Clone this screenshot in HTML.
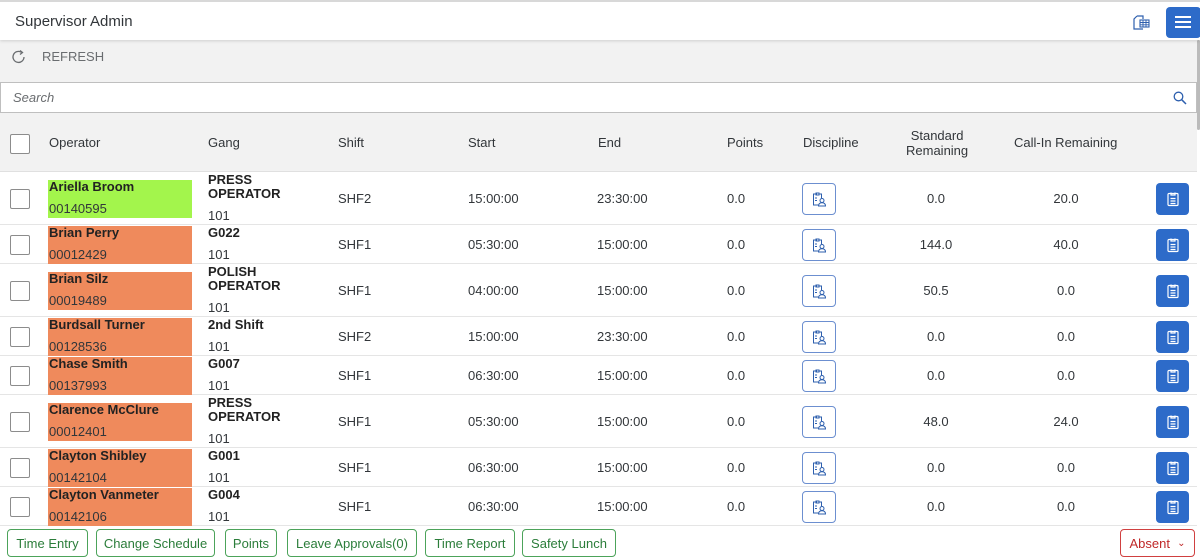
<!DOCTYPE html>
<html><head><meta charset="utf-8"><style>
*{box-sizing:border-box;margin:0;padding:0}
body{width:1200px;height:553px;overflow:hidden;background:#fff;font-family:"Liberation Sans",Arial,sans-serif;color:#32363a;position:relative;font-size:13px}
.top{position:absolute;left:0;top:0;width:1200px;height:40px;background:#fff;border-top:2px solid #d8d8d8;box-shadow:0 1px 3px rgba(0,0,0,.15);z-index:2}
.title{position:absolute;left:15px;top:11px;font-size:15px;color:#32363a}
.menu{position:absolute;left:1166px;top:5px;width:35px;height:31px;background:#2d6bc9;border-radius:4px}
.menu i{position:absolute;left:9px;width:16px;height:2px;background:#fff}
.tb{position:absolute;left:0;top:40px;width:1200px;height:42px;background:#f2f2f2}
.search{position:absolute;left:0;top:82px;width:1197px;height:31px;background:#fff;border:1px solid #bfbfbf}
.search span{position:absolute;left:12px;top:7px;font-style:italic;color:#6a6d70;font-size:13px}
.th{position:absolute;left:0;top:113px;width:1197px;height:59px;background:#f2f2f2;border-bottom:1px solid #e0e0e0}
.th span{position:absolute;font-size:13px;color:#32363a}
.cb{position:absolute;left:10px;width:20px;height:20px;border:1px solid #8c8c8c;border-radius:2px;background:#fff}
.r{position:absolute;left:0;width:1197px;border-bottom:1px solid #e5e5e5;background:#fff}
.c{position:absolute;top:0;bottom:0;display:flex;align-items:center;font-size:13px}
.cc{justify-content:center}
.nm{position:absolute;left:48px;width:144px;height:38px}
.nm b{position:absolute;left:1px;top:0;line-height:13px;font-size:13px;color:#222}
.nm span{position:absolute;left:1px;bottom:0;line-height:18px;font-size:13px;color:#32363a}
.g{background:#a3f54c}.o{background:#ef8a5c}
.gang{position:absolute;left:208px;top:1px;bottom:0;width:120px}
.gang b{display:block;line-height:14px;font-size:13px;color:#222}
.gang span{position:absolute;left:0;bottom:0;line-height:16px}
.db{position:absolute;left:802px;width:34px;height:32px;border:1px solid #6c8fd0;border-radius:4px;background:#fff}
.bb{position:absolute;left:1156px;width:33px;height:32px;background:#2d6bc9;border-radius:4px}
.db svg,.bb svg{position:absolute;left:50%;top:50%;transform:translate(-50%,-50%)}
.bt{position:absolute;top:529px;height:28px;border:1px solid #4ca35a;border-radius:4px;color:#2b7d3a;font-size:13px;display:flex;align-items:center;justify-content:center;background:#fff}
.sb{position:absolute;left:1197px;top:40px;width:3px;height:90px;background:#bbb;border-radius:2px}
</style></head><body>
<div class="top"><div class="title">Supervisor Admin</div>
<svg style="position:absolute;left:1133px;top:12px" width="17" height="16" viewBox="0 0 17 16"><path d="M4 2h6v3M4 2L1 5v10h9" fill="none" stroke="#2d5fae" stroke-width="1.2"/><rect x="7" y="6" width="9" height="7" fill="#fff" stroke="#2d5fae" stroke-width="1.1"/><path d="M7 8.5h9M7 10.8h9M10 6v7M13 6v7" stroke="#2d5fae" stroke-width=".9"/></svg>
<div class="menu"><i style="top:9px"></i><i style="top:14px"></i><i style="top:19px"></i></div></div>
<div class="tb"><svg style="position:absolute;left:11px;top:9px" width="16" height="16" viewBox="0 0 16 16"><path d="M13 8A5.5 5.5 0 1 1 10.5 3.3" fill="none" stroke="#6a6d70" stroke-width="1.3"/><path d="M9 1.5l2.5 2-2.5 2" fill="none" stroke="#6a6d70" stroke-width="1.3"/></svg><span style="position:absolute;left:42px;top:9px;font-size:13px;color:#6a6d70">REFRESH</span></div>
<div class="sb"></div>
<div class="search"><span>Search</span><svg style="position:absolute;left:1172px;top:8px" width="14" height="14" viewBox="0 0 14 14"><circle cx="5.5" cy="5.5" r="4.3" fill="none" stroke="#2d5fae" stroke-width="1.3"/><path d="M8.7 8.7L13 13" stroke="#2d5fae" stroke-width="1.5"/></svg></div>
<div class="th"><div class="cb" style="top:21px"></div>
<span style="left:49px;top:22px">Operator</span><span style="left:208px;top:22px">Gang</span><span style="left:338px;top:22px">Shift</span><span style="left:468px;top:22px">Start</span><span style="left:598px;top:22px">End</span><span style="left:727px;top:22px">Points</span><span style="left:803px;top:22px">Discipline</span><span style="left:906px;top:15px;text-align:center;line-height:15px">Standard<br>Remaining</span><span style="left:1014px;top:22px">Call-In Remaining</span></div>

<div id="rows"></div>
<script>
var R=[[172,53,'g','Ariella Broom','00140595',['PRESS','OPERATOR'],'SHF2','15:00:00','23:30:00','0.0','0.0','20.0'],
[225,39,'o','Brian Perry','00012429',['G022'],'SHF1','05:30:00','15:00:00','0.0','144.0','40.0'],
[264,53,'o','Brian Silz','00019489',['POLISH','OPERATOR'],'SHF1','04:00:00','15:00:00','0.0','50.5','0.0'],
[317,39,'o','Burdsall Turner','00128536',['2nd Shift'],'SHF2','15:00:00','23:30:00','0.0','0.0','0.0'],
[356,39,'o','Chase Smith','00137993',['G007'],'SHF1','06:30:00','15:00:00','0.0','0.0','0.0'],
[395,53,'o','Clarence McClure','00012401',['PRESS','OPERATOR'],'SHF1','05:30:00','15:00:00','0.0','48.0','24.0'],
[448,39,'o','Clayton Shibley','00142104',['G001'],'SHF1','06:30:00','15:00:00','0.0','0.0','0.0'],
[487,39,'o','Clayton Vanmeter','00142106',['G004'],'SHF1','06:30:00','15:00:00','0.0','0.0','0.0']];
var di='<svg width="16" height="16" viewBox="0 0 16 16" fill="none" stroke="#2d5fae" stroke-width="1"><path d="M6 3H2.5v11H7M5 2h3v2H5zM8 3h2.5v4"/><path d="M4 7h2M4 9.5h2"/><circle cx="11" cy="9.5" r="2"/><path d="M7.5 15c0-2.5 1.5-3.3 3.5-3.3s3.5.8 3.5 3.3z"/></svg>';
var bi='<svg width="12" height="15" viewBox="0 0 12 15" fill="none" stroke="#fff" stroke-width="1.2"><rect x="1" y="2" width="10" height="12" rx="1"/><path d="M4 1v2.5h4V1M3.5 7h5M3.5 9.5h5M3.5 12h5"/></svg>';
var h='';R.forEach(function(r){var t=r[0],H=r[1];
h+='<div class="r" style="top:'+t+'px;height:'+H+'px"><div class="cb" style="top:'+(H/2-10)+'px"></div>'+
'<div class="nm '+r[2]+'" style="top:'+Math.round((H-38)/2)+'px"><b>'+r[3]+'</b><span>'+r[4]+'</span></div>'+
'<div class="gang">'+r[5].map(function(x){return '<b>'+x+'</b>'}).join('')+'<span>101</span></div>'+
'<div class="c" style="left:338px">'+r[6]+'</div><div class="c" style="left:468px">'+r[7]+'</div><div class="c" style="left:597px">'+r[8]+'</div><div class="c" style="left:727px">'+r[9]+'</div>'+
'<div class="db" style="top:'+(H/2-16)+'px">'+di+'</div>'+
'<div class="c cc" style="left:886px;width:100px">'+r[10]+'</div><div class="c cc" style="left:1016px;width:100px">'+r[11]+'</div>'+
'<div class="bb" style="top:'+(H/2-16)+'px">'+bi+'</div></div>';});
document.getElementById('rows').innerHTML=h;
</script>
<div class="bt" style="left:7px;width:81px">Time Entry</div>
<div class="bt" style="left:96px;width:119px">Change Schedule</div>
<div class="bt" style="left:225px;width:52px">Points</div>
<div class="bt" style="left:287px;width:130px">Leave Approvals(0)</div>
<div class="bt" style="left:425px;width:90px">Time Report</div>
<div class="bt" style="left:522px;width:94px">Safety Lunch</div>
<div class="bt" style="left:1120px;width:75px;border-color:#d04040;color:#c02828">Absent&nbsp;&nbsp;<span style="font-size:10px">&#8964;</span></div>
</body></html>
